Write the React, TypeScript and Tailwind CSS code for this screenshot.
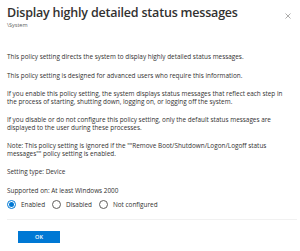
import React, { useState } from 'react';

const paragraphs: React.ReactNode[] = [
  <>This policy setting directs the system to display highly detailed status messages.</>,
  <>This policy setting is designed for advanced users who require this information.</>,
  <>
    If you enable this policy setting, the system displays status messages that reflect each step in
    <br />
    the process of starting, shutting down, logging on, or logging off the system.
  </>,
  <>
    If you disable or do not configure this policy setting, only the default status messages are
    <br />
    displayed to the user during these processes.
  </>,
  <>
    Note: This policy setting is ignored if the ""Remove Boot/Shutdown/Logon/Logoff status
    <br />
    messages"" policy setting is enabled.
  </>,
  <>Setting type: Device</>,
  <>Supported on: At least Windows 2000</>,
];

const options = ['Enabled', 'Disabled', 'Not configured'];

export default function App() {
  const [value, setValue] = useState('Enabled');

  return (
    <div className="w-[300px] h-[251px] bg-white text-[#323130] font-['Open_Sans',sans-serif] overflow-hidden">
      {/* Header */}
      <div className="flex items-start justify-between pl-[7px] pr-[9px] pt-[4px]">
        <div>
          <h1 className="text-[12.5px] leading-[18px] font-semibold tracking-[-0.2px] whitespace-nowrap">
            Display highly detailed status messages
          </h1>
          <p className="text-[5.5px] leading-[7px] text-[#605e5c]">\System</p>
        </div>
        <button className="mt-[9px] text-[#8a8886]">
          <svg width="6" height="6" viewBox="0 0 6 6" fill="none" stroke="currentColor" strokeWidth="0.7">
            <path d="M0.5 0.5 L5.5 5.5 M5.5 0.5 L0.5 5.5" />
          </svg>
        </button>
      </div>

      {/* Body */}
      <div className="pl-[7px] pt-[24px] text-[6.4px] leading-[7.5px] whitespace-nowrap flex flex-col gap-[11px]">
        {paragraphs.map((p, i) => (
          <p key={i}>{p}</p>
        ))}
      </div>

      {/* Radios */}
      <div className="flex items-center pl-[7px] mt-[6px] text-[6.4px] leading-[9px]">
        {options.map((opt) => {
          const checked = value === opt;
          return (
            <button
              key={opt}
              onClick={() => setValue(opt)}
              className="flex items-center gap-[5px] mr-[7px]"
            >
              <span
                className={`w-[9px] h-[9px] rounded-full border-[0.8px] flex items-center justify-center ${
                  checked ? 'border-[#0078d4]' : 'border-[#605e5c]'
                }`}
              >
                {checked && <span className="w-[4.5px] h-[4.5px] rounded-full bg-[#0078d4]" />}
              </span>
              <span>{opt}</span>
            </button>
          );
        })}
      </div>

      {/* Divider */}
      <div className="ml-[7px] mr-[3px] mt-[10px] h-px bg-[#f1f1f1]" />

      {/* Footer */}
      <div className="pl-[18px] pt-[11px]">
        <button className="w-[42px] h-[12px] bg-[#0078d4] text-white text-[5.5px] font-semibold flex items-center justify-center">
          OK
        </button>
      </div>
    </div>
  );
}
